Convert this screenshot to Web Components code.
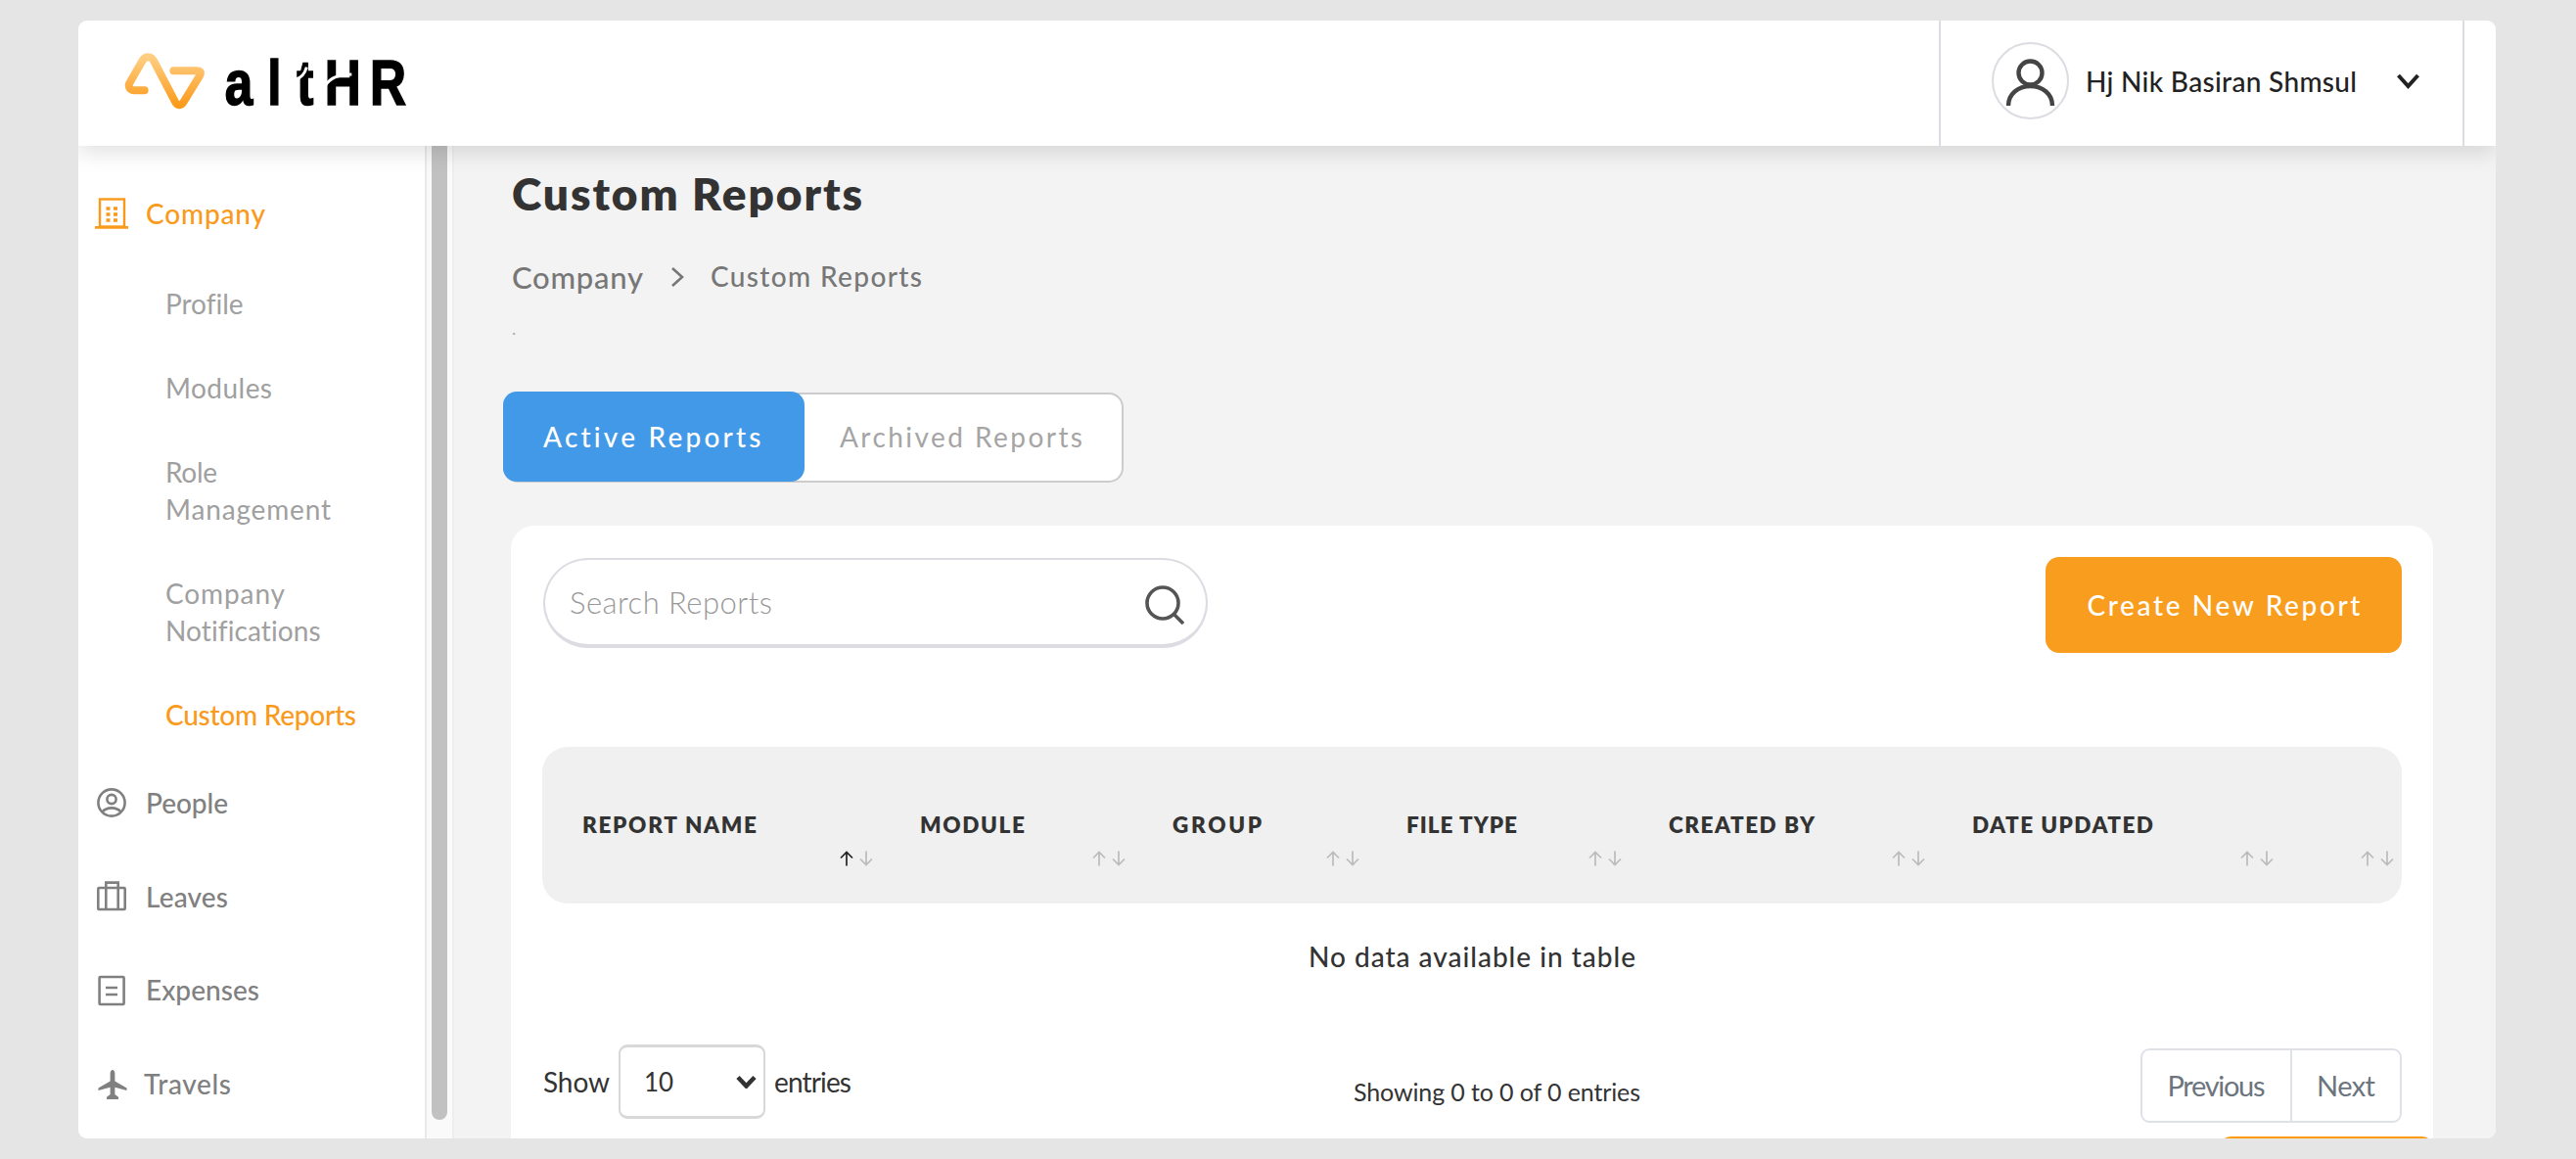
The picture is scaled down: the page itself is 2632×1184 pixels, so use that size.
<!DOCTYPE html>
<html lang="en">
<head>
<meta charset="utf-8">
<title>altHR Custom Reports</title>
<style>
html,body{margin:0;padding:0;height:1184px;overflow:hidden;background:#e5e5e5;font-family:Lato,"Noto Sans",sans-serif}
</style>
</head>
<body>
<app-frame>
  <app-header name="Hj Nik Basiran Shmsul"></app-header>
  <div style="display:flex;flex:1;min-height:0">
    <side-nav></side-nav>
    <page-main></page-main>
  </div>
</app-frame>
<script>
function def(name, css, html){
  customElements.define(name, class extends HTMLElement{
    connectedCallback(){
      if(this.shadowRoot) return;
      const s=this.attachShadow({mode:'open'});
      s.innerHTML='<style>'+css+'</style>'+(typeof html==='function'?html(this):html);
    }
  });
}
const ORANGE='#f99a1c';
const ICONS={
 company:`<svg width="36" height="36" viewBox="0 0 36 36" fill="none" stroke="currentColor" stroke-width="2.4"><rect x="5" y="3.5" width="25" height="28"/><path d="M0 32.3H34" stroke-width="2.8"/><path d="M11.5 13h4M19 13h4M11.5 19h4M19 19h4M11.5 25h4M19 25h4" stroke-width="3.4"/></svg>`,
 people:`<svg width="36" height="36" viewBox="0 0 36 36" fill="none" stroke="currentColor" stroke-width="2.6"><circle cx="17" cy="18" r="13.6"/><circle cx="17" cy="14.5" r="4.6"/><path d="M7.5 27.5C10 24.4 13.4 23.4 17 23.4S24 24.4 26.5 27.5"/></svg>`,
 leaves:`<svg width="36" height="36" viewBox="0 0 36 36" fill="none" stroke="currentColor" stroke-width="2.6"><rect x="3.3" y="9" width="27.4" height="22" rx="1"/><path d="M11.3 31V3.6H23.7V31"/></svg>`,
 expenses:`<svg width="36" height="36" viewBox="0 0 36 36" fill="none" stroke="currentColor" stroke-width="2.6"><rect x="4.6" y="5" width="25" height="28" rx="1"/><path d="M11 16H23M11 23H23"/></svg>`,
 travels:`<svg width="36" height="36" viewBox="0 0 36 36" fill="currentColor"><path d="M18 4c1.5 0 2.4 2 2.4 4v7.5L32.500 22.500V25L20.400 21.800V29L24 31.800V34H12V31.800L15.600 29V21.800L3.500 25V22.500L15.600 15.500V8c0-2 .9-4 2.400-4z"/></svg>`
};

def('app-frame',`:host{display:flex;flex-direction:column;margin:21px 82px 0 80px;height:1142px;border-radius:9px;overflow:hidden;background:#f3f3f3}`,`<slot></slot>`);

def('app-header',`
:host{display:flex;justify-content:space-between;height:128px;flex:none;background:#fff;position:relative;z-index:2;box-shadow:0 6px 22px rgba(0,0,0,.13)}
.logo{margin:9px 0 0 20px;width:340px;height:110px;display:block}
.logo text{font:700 192px "Liberation Sans",sans-serif;fill:#000;stroke:#000;stroke-width:5px}
.user{margin-right:32px;border-left:2px solid #dcdce4;border-right:2px solid #dcdce4;display:flex;align-items:center;padding:0 0 5px 52px;box-sizing:content-box;width:481px}
.avatar{width:79px;height:79px;border-radius:50%;border:2px solid #dcdce2;box-sizing:border-box;flex:none}
.avatar svg{display:block;margin:-2px}
.name{margin-left:17px;font:500 28px/40px Lato,sans-serif;color:#222}
.chev{margin-left:41px}
`,h=>`
<svg class="logo" viewBox="0 0 1020 330" role="img" aria-label="altHR">
 <defs><linearGradient id="g" x1="0" y1="0" x2="0" y2="1"><stop offset="0" stop-color="#ffce82"/><stop offset="1" stop-color="#fb9b1c"/></linearGradient></defs>
 <path d="M143 187H112C98 187 91 175 98 163L136 97C146 80 165 82 172 98L237 222C244 236 256 234 263 222L312 142C319 130 312 127 302 127H232" fill="none" stroke="url(#g)" stroke-width="24" stroke-linecap="round" stroke-linejoin="round"/>
 <text transform="scale(.8 1)" y="232" x="487 650 762 869 1043">altHR</text>
 <path d="M606 153C624 150 634 136 640 116" fill="none" stroke="#fff" stroke-width="9"/>
 <path d="M698 172C712 148 735 140 778 138" fill="none" stroke="#fff" stroke-width="9"/>
</svg>
<div class="user">
 <div class="avatar"><svg width="79" height="79" viewBox="0 0 79 79" fill="none" stroke="#444" stroke-width="4.400"><ellipse cx="39.500" cy="31.500" rx="12" ry="12"/><path d="M17 65C17 53 27 45 39.500 45S62 53 62 65"/></svg></div>
 <div class="name"><fit-text w="277">${h.getAttribute('name')}</fit-text></div>
 <svg class="chev" width="23" height="16" viewBox="0 0 23 16" fill="none" stroke="#222" stroke-width="4"><path d="M1.500 2L11.500 13L21.500 2"/></svg>
</div>`);

def('nav-link',`
:host{display:flex;align-items:center;gap:16px;height:38px;margin-top:var(--mt,58px);color:#808080;font:500 28px/38px Lato,sans-serif}
:host([active]){color:${ORANGE}}
svg{display:block;flex:none}
`,h=>ICONS[h.getAttribute('icon')]+`<slot></slot>`);

def('nav-sub',`
:host{display:block;margin:48px 0 0 72px;color:#a0a0a0;font:400 28px/38px Lato,sans-serif}
:host([active]){color:${ORANGE};font-weight:500}
`,`<slot></slot>`);

def('side-nav',`
:host{display:flex;width:384px;flex:none;background:#fff}
nav{box-sizing:border-box;padding:50px 0 0 17px;border-right:2px solid #e9e9e9;width:356px}
.track{width:26px;background:#fafafa;border-right:2px solid #eee;display:flex;justify-content:center}
.thumb{width:16px;margin-bottom:19px;background:#c1c1c1;border-radius:0 0 8px 8px}
`,`
<nav>
 <nav-link icon="company" active style="--mt:0px"><fit-text w="122">Company</fit-text></nav-link>
 <nav-sub style="margin-top:54px"><fit-text w="79">Profile</fit-text></nav-sub>
 <nav-sub><fit-text w="109">Modules</fit-text></nav-sub>
 <nav-sub><fit-text w="53">Role</fit-text><br><fit-text w="169">Management</fit-text></nav-sub>
 <nav-sub><fit-text w="122">Company</fit-text><br><fit-text w="159">Notifications</fit-text></nav-sub>
 <nav-sub active><fit-text w="195">Custom Reports</fit-text></nav-sub>
 <nav-link icon="people" style="--mt:52px"><fit-text w="84">People</fit-text></nav-link>
 <nav-link icon="leaves"><fit-text w="84">Leaves</fit-text></nav-link>
 <nav-link icon="expenses" style="--mt:57px"><fit-text w="116">Expenses</fit-text></nav-link>
 <nav-link icon="travels"><span style="margin-left:-2px"><fit-text w="89">Travels</fit-text></span></nav-link>
</nav>
<div class="track"><div class="thumb"></div></div>`);

def('page-main',`
:host{display:block;flex:1;min-width:0;padding:19px 64px 0 59px;box-sizing:border-box;background:#f3f3f3}
h1{margin:0;font:800 46px/60px Lato,sans-serif;color:#333}
.crumbs{display:flex;align-items:center;margin-top:35px;height:40px;color:#777;font:500 31px/40px Lato,sans-serif}
.crumbs svg{margin:0 27px 0 28px;flex:none}
.crumbs .cur{font-size:28px;margin-top:-3px}
.dot{margin-top:22px;font:400 18px/20px Lato,sans-serif;color:#aaa}
report-tabs{margin:56px 0 0 -9px}
report-card{margin:44px 0 0 -1px}
`,`
<h1><fit-text w="358">Custom Reports</fit-text></h1>
<div class="crumbs"><fit-text w="134">Company</fit-text>
 <svg width="14" height="22" viewBox="0 0 14 22" fill="none" stroke="#777" stroke-width="2.600"><path d="M2 2L12 11L2 20"/></svg>
 <span class="cur"><fit-text w="216">Custom Reports</fit-text></span></div>
<div class="dot">.</div>
<report-tabs></report-tabs>
<report-card></report-card>`);

def('report-tabs',`
:host{display:flex;width:634px;height:92px;box-sizing:border-box;background:#fff;border:2px solid #ccc;border-radius:15px;font:400 28px/40px Lato,sans-serif}
.on{margin:-3px 0 -1px -2px;width:308px;box-sizing:border-box;padding-left:41px;display:flex;align-items:center;background:#4299e8;color:#fff;border-radius:14px;font-weight:500}
.off{margin-left:36px;padding-bottom:2px;display:flex;align-items:center;color:#a5a5a5}
`,`<div class="on"><fit-text w="223">Active Reports</fit-text></div><div class="off"><fit-text w="248">Archived Reports</fit-text></div>`);

def('search-box',`
:host{display:flex;align-items:center;justify-content:space-between;width:679px;height:92px;margin-bottom:4px;margin-left:1px;box-sizing:border-box;border:2px solid #dcdce2;border-bottom-width:4px;border-radius:46px;background:#fff;padding:0 22px 0 25px;font:300 31px/40px Lato,sans-serif;color:#999}
svg{display:block;margin-top:6px}
`,`<fit-text w="207">Search Reports</fit-text>
<svg width="40" height="40" viewBox="0 0 40 40" fill="none" stroke="#555" stroke-width="3.600"><circle cx="18" cy="18" r="16"/><path d="M30 30L39 39"/></svg>`);

def('action-button',`
:host{display:flex;align-items:center;justify-content:center;width:364px;height:98px;box-sizing:border-box;background:#f99d1f;color:#fff;border-radius:14px;font:500 28px/40px Lato,sans-serif}
`,`<slot></slot>`);

def('sort-arrows',`
:host{display:flex;gap:6px;justify-content:flex-end;padding-right:7px}
svg{display:block}
`,h=>{const a=h.hasAttribute('on')?'#222':'#bbb';return `
<svg width="14" height="16" viewBox="0 0 14 16" fill="none" stroke="${a}" stroke-width="1.700"><path d="M7 15.500V1.500M1 7.500L7 1.500L13 7.500"/></svg>
<svg width="14" height="16" viewBox="0 0 14 16" fill="none" stroke="#bbb" stroke-width="1.700"><path d="M7 .5V14.500M1 8.500L7 14.500L13 8.500"/></svg>`});

def('th-cell',`
:host{display:block;padding:68px 0 0 41px;min-width:0}
.t{height:24px;font:800 22.500px/24px Lato,sans-serif;color:#333;white-space:nowrap}
sort-arrows{margin-top:14px;margin-left:-41px}
`,h=>`<div class="t"><slot></slot></div><sort-arrows ${h.hasAttribute('on')?'on':''}></sort-arrows>`);

def('report-table',`
:host{display:block}
.head{display:grid;grid-template-columns:345px 258px 239px 268px 310px 356px 123px;height:160px;background:#f0f0f0;border-radius:26px}
.empty{height:108px;display:flex;align-items:center;justify-content:center;font:500 28px/40px Lato,sans-serif;color:#333}
`,`
<div class="head">
 <th-cell on><fit-text w="178">REPORT NAME</fit-text></th-cell>
 <th-cell><fit-text w="107">MODULE</fit-text></th-cell>
 <th-cell><fit-text w="91">GROUP</fit-text></th-cell>
 <th-cell><fit-text w="113">FILE TYPE</fit-text></th-cell>
 <th-cell><fit-text w="149">CREATED BY</fit-text></th-cell>
 <th-cell><fit-text w="185">DATE UPDATED</fit-text></th-cell>
 <th-cell></th-cell>
</div>
<div class="empty"><fit-text w="334">No data available in table</fit-text></div>`);

def('length-select',`
:host{display:flex;align-items:center;justify-content:space-between;width:150px;height:76px;box-sizing:border-box;border:2px solid #d8d8d8;border-top-width:3px;border-bottom-width:3px;border-radius:9px;padding:0 7px 0 24px;color:#333;font-size:26px}
svg{display:block}
`,`<span>10</span><svg width="21" height="14" viewBox="0 0 21 14" fill="none" stroke="#333" stroke-width="4.500"><path d="M2 2.500L10.500 11.500L19 2.500"/></svg>`);

def('table-footer',`
:host{display:grid;grid-template-columns:829px 1fr auto;align-items:start;padding-top:36px;font:400 28px/40px Lato,sans-serif;color:#333}
.len{display:flex;align-items:center;gap:9px;padding-left:1px}
.info{margin-top:33px;font-size:25px;line-height:30px}
.pager{margin-top:4px;display:flex;height:76px;box-sizing:border-box;border:2px solid #dee2e6;border-radius:9px;color:#6c757d;font-size:29px;line-height:72px}
.pager div{display:flex;justify-content:center}
.pager .p{width:151px;border-right:2px solid #dee2e6}
.pager .n{width:110px}
`,`
<div class="len"><fit-text w="68">Show</fit-text><length-select></length-select><fit-text w="79">entries</fit-text></div>
<div class="info"><fit-text w="293">Showing 0 to 0 of 0 entries</fit-text></div>
<div class="pager"><div class="p"><fit-text w="100">Previous</fit-text></div><div class="n"><fit-text w="60">Next</fit-text></div></div>`);

def('report-card',`
:host{display:block;background:#fff;border-radius:24px 24px 0 0;padding:32px 32px 0}
.top{display:flex;justify-content:space-between;align-items:center;margin-bottom:96px}
.stub{width:222px;height:60px;margin:14px -34px 0 auto;background:#fd9a06;border-radius:14px}
`,`
<div class="top"><search-box></search-box><action-button><fit-text w="279">Create New Report</fit-text></action-button></div>
<report-table></report-table>
<table-footer></table-footer>
<div class="stub"></div>`);

/* Registered last: it reads the font it inherits from the elements above. */
customElements.define('fit-text', class extends HTMLElement{
  constructor(){super();this.attachShadow({mode:'open'}).innerHTML='<style>:host{display:inline-block;white-space:nowrap}</style><slot></slot>';}
  connectedCallback(){
    const w=parseFloat(this.getAttribute('w')), n=this.textContent.length;
    if(!w||n<2) return;
    this.style.letterSpacing='0px';
    const natural=this.getBoundingClientRect().width;
    this.style.letterSpacing=((w-natural)/(n-1)).toFixed(3)+'px';
    this.style.marginRight=(-(w-natural)/(n-1)).toFixed(3)+'px';
  }
});
</script>
</body>
</html>
